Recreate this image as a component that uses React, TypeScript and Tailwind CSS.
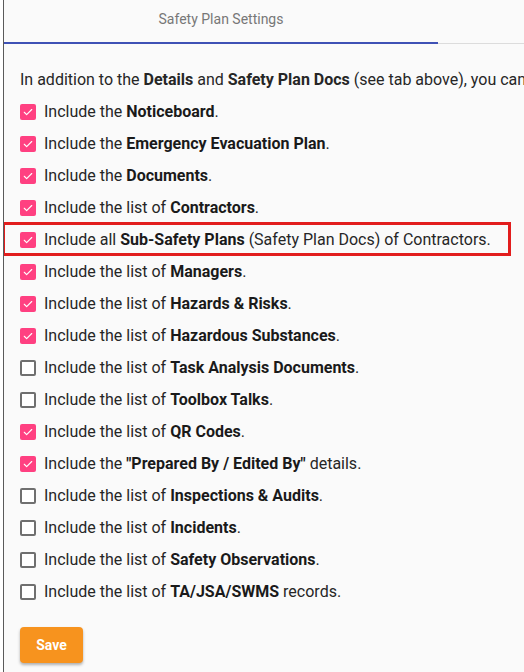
import React from "react";

type Item = { parts: (string | { b: string })[]; checked: boolean; highlight?: boolean };

const items: Item[] = [
  { parts: ["Include the ", { b: "Noticeboard" }, "."], checked: true },
  { parts: ["Include the ", { b: "Emergency Evacuation Plan" }, "."], checked: true },
  { parts: ["Include the ", { b: "Documents" }, "."], checked: true },
  { parts: ["Include the list of ", { b: "Contractors" }, "."], checked: true },
  {
    parts: ["Include all ", { b: "Sub-Safety Plans" }, " (Safety Plan Docs) of Contractors."],
    checked: true,
    highlight: true,
  },
  { parts: ["Include the list of ", { b: "Managers" }, "."], checked: true },
  { parts: ["Include the list of ", { b: "Hazards & Risks" }, "."], checked: true },
  { parts: ["Include the list of ", { b: "Hazardous Substances" }, "."], checked: true },
  { parts: ["Include the list of ", { b: "Task Analysis Documents" }, "."], checked: false },
  { parts: ["Include the list of ", { b: "Toolbox Talks" }, "."], checked: false },
  { parts: ["Include the list of ", { b: "QR Codes" }, "."], checked: true },
  { parts: ["Include the ", { b: "\"Prepared By / Edited By\"" }, " details."], checked: true },
  { parts: ["Include the list of ", { b: "Inspections & Audits" }, "."], checked: false },
  { parts: ["Include the list of ", { b: "Incidents" }, "."], checked: false },
  { parts: ["Include the list of ", { b: "Safety Observations" }, "."], checked: false },
  { parts: ["Include the list of ", { b: "TA/JSA/SWMS" }, " records."], checked: false },
];

function Box({ checked }: { checked: boolean }) {
  if (checked) {
    return (
      <span className="flex h-[16px] w-[16px] shrink-0 items-center justify-center rounded-[2px] bg-[#ff4081]">
        <svg width="12" height="12" viewBox="0 0 24 24" fill="none">
          <path d="M4.5 12.5l4.8 4.8L19.5 7" stroke="#fff" strokeWidth="2.2" strokeLinecap="round" strokeLinejoin="round" />
        </svg>
      </span>
    );
  }
  return <span className="h-[16px] w-[16px] shrink-0 rounded-[2px] border-2 border-[#6f6f6f] bg-white" />;
}

export default function App() {
  return (
    <div
      className="relative h-[672px] w-full overflow-hidden bg-white"
      style={{ fontFamily: "Roboto, 'Liberation Sans', sans-serif" }}
    >
      <div className="ml-[3px] h-full overflow-hidden border-l border-[#5a5a5a] bg-[#fafafa]">
        <div className="flex h-[44px] border-b border-[#dcdcdc]">
          <div className="flex h-[44px] w-[434px] justify-center border-b-2 border-[#3f51b5] pt-[9px] text-[14px] leading-[20px] text-[#777777]">
            Safety Plan Settings
          </div>
        </div>
        <div className="whitespace-nowrap pl-[16px] pt-[26px] text-[16px] leading-[20px] text-[#262626]">
          In addition to the <b className="font-bold">Details</b> and <b className="font-bold">Safety Plan Docs</b> (see tab above), you can choose to include the following:
        </div>
        <div className="mt-[6px] flex flex-col pl-[16px]">
          {items.map((it, i) => (
            <div key={i} className="relative flex h-[32px] items-center gap-[8px] text-[16px] text-[#262626]">
              <Box checked={it.checked} />
              <span className="whitespace-nowrap">
                {it.parts.map((p, j) =>
                  typeof p === "string" ? (
                    <React.Fragment key={j}>{p}</React.Fragment>
                  ) : (
                    <b key={j} className="font-bold text-[#1a1a1a]">
                      {p.b}
                    </b>
                  )
                )}
              </span>
              {it.highlight && (
                <div className="pointer-events-none absolute left-[-18px] top-[-2px] h-[34px] w-[509px] border-[3px] border-[#e21d1d]" />
              )}
            </div>
          ))}
        </div>
        <div className="pl-[16px] pt-[19px]">
          <button className="h-[36px] w-[63px] rounded-[4px] bg-[#f7931e] text-[14px] font-bold text-white shadow-[0_2px_3px_rgba(0,0,0,0.3)]">
            Save
          </button>
        </div>
      </div>
    </div>
  );
}
